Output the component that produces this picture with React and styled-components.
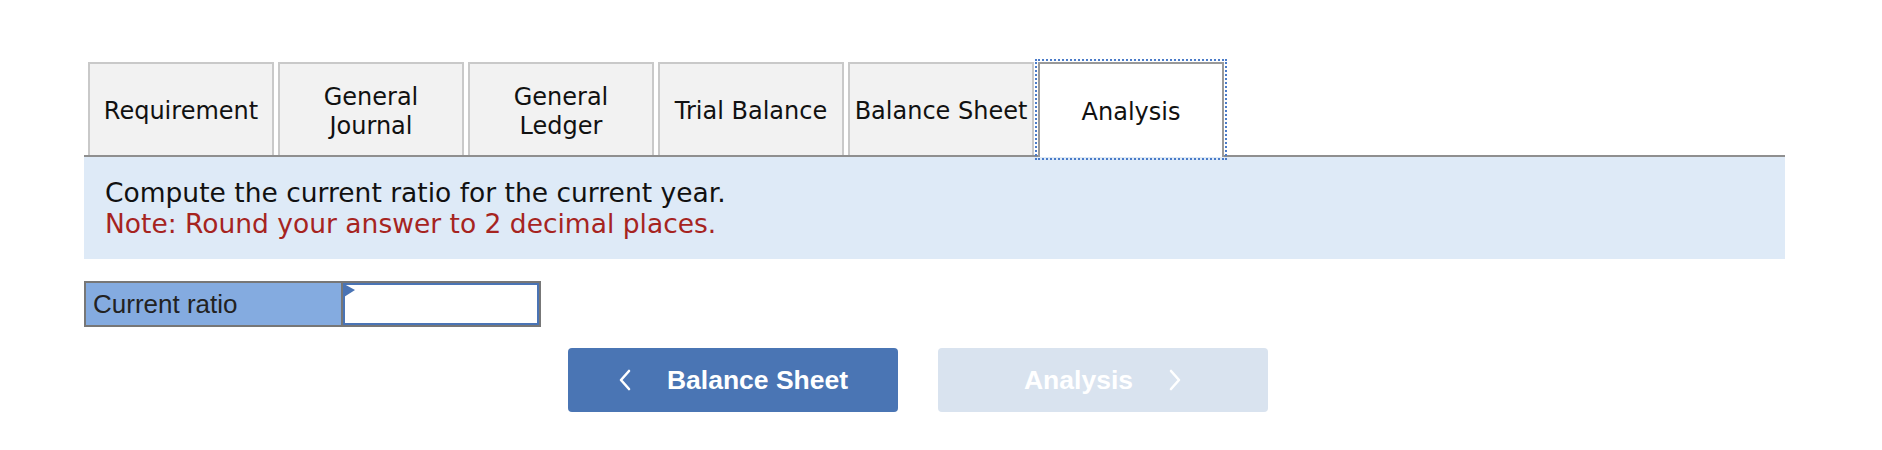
import React from "react";
import styled, { createGlobalStyle } from "styled-components";

const Global = createGlobalStyle`
  html, body { margin: 0; padding: 0; background: #ffffff; }
  body { font-family: "DejaVu Sans", Verdana, sans-serif; color: #111; }
`;

const Page = styled.div`
  width: 1701px;
  padding: 62px 0 0 84px;
`;

const TabBar = styled.div`
  display: flex;
  gap: 4px;
  padding-left: 4px;
  border-bottom: 2px solid #8f8f8f;
`;

const Tab = styled.div`
  box-sizing: border-box;
  width: 186px;
  height: ${(p) => (p.$active ? "95px" : "93px")};
  margin-bottom: ${(p) => (p.$active ? "-2px" : "0")};
  padding-top: 4px;
  display: flex;
  align-items: center;
  justify-content: center;
  text-align: center;
  font-size: 24px;
  line-height: 29px;
  color: #111;
  background: ${(p) => (p.$active ? "#ffffff" : "#f2f2f2")};
  border: 2px solid ${(p) => (p.$active ? "#9a9a9a" : "#c9c9c9")};
  border-bottom: none;
  outline: ${(p) => (p.$active ? "2px dotted #4a7bc8" : "none")};
  outline-offset: 1px;
  position: relative;
`;

const Prompt = styled.div`
  background: #deeaf7;
  padding: 20px 21px 0;
  height: 82px;
  font-size: 26.5px;
  line-height: 31px;
`;

const Note = styled.div`
  color: #a6241f;
`;

const AnswerRow = styled.div`
  margin-top: 22px;
  display: flex;
  width: 457px;
  height: 46px;
  box-sizing: border-box;
  border: 2px solid #777;
  background: #777;
  gap: 2px;
`;

const Label = styled.div`
  width: 255px;
  background: #84abe0;
  font-family: "Liberation Sans", Arial, sans-serif;
  font-size: 26px;
  color: #222;
  display: flex;
  align-items: center;
  padding-left: 7px;
  box-sizing: border-box;
`;

const InputCell = styled.div`
  position: relative;
  flex: 1;
  background: #fff;
  border: 2px solid #4a74b5;
`;

const Marker = styled.span`
  position: absolute;
  left: -1px;
  top: -1px;
  width: 0;
  height: 0;
  border-top: 6px solid transparent;
  border-bottom: 7px solid transparent;
  border-left: 11px solid #4a74b5;
`;

const Input = styled.input`
  width: 100%;
  height: 100%;
  border: none;
  outline: none;
  background: transparent;
  box-sizing: border-box;
`;

const ButtonRow = styled.div`
  display: flex;
  gap: 40px;
  padding-left: 484px;
  margin-top: 21px;
`;

const NavButton = styled.button`
  width: 330px;
  height: 64px;
  border: none;
  border-radius: 4px;
  background: ${(p) => (p.$disabled ? "#d9e3ef" : "#4a75b4")};
  color: #fff;
  font-family: "Liberation Sans", Arial, sans-serif;
  font-weight: bold;
  font-size: 26.5px;
  display: flex;
  align-items: center;
  justify-content: center;
  gap: 35px;
  padding: 0;
  cursor: ${(p) => (p.$disabled ? "default" : "pointer")};
`;

const Chevron = ({ dir }) => (
  <svg width="14" height="22" viewBox="0 0 14 22" fill="none">
    <path
      d={dir === "left" ? "M11 2 L3 11 L11 20" : "M3 2 L11 11 L3 20"}
      stroke="#fff"
      strokeWidth="2.6"
      strokeLinecap="round"
      strokeLinejoin="round"
    />
  </svg>
);

const tabs = [
  ["Requirement"],
  ["General", "Journal"],
  ["General", "Ledger"],
  ["Trial Balance"],
  ["Balance Sheet"],
  ["Analysis"],
];

export default function App() {
  return (
    <>
      <Global />
      <Page>
        <TabBar>
          {tabs.map((lines, i) => (
            <Tab key={i} $active={i === 5}>
              <div>
                {lines.map((l, j) => (
                  <div key={j}>{l}</div>
                ))}
              </div>
            </Tab>
          ))}
        </TabBar>
        <Prompt>
          <div>Compute the current ratio for the current year.</div>
          <Note>Note: Round your answer to 2 decimal places.</Note>
        </Prompt>
        <AnswerRow>
          <Label>Current ratio</Label>
          <InputCell>
            <Marker />
            <Input aria-label="Current ratio" />
          </InputCell>
        </AnswerRow>
        <ButtonRow>
          <NavButton>
            <Chevron dir="left" />
            <span>Balance Sheet</span>
          </NavButton>
          <NavButton $disabled disabled>
            <span>Analysis</span>
            <Chevron dir="right" />
          </NavButton>
        </ButtonRow>
      </Page>
    </>
  );
}
